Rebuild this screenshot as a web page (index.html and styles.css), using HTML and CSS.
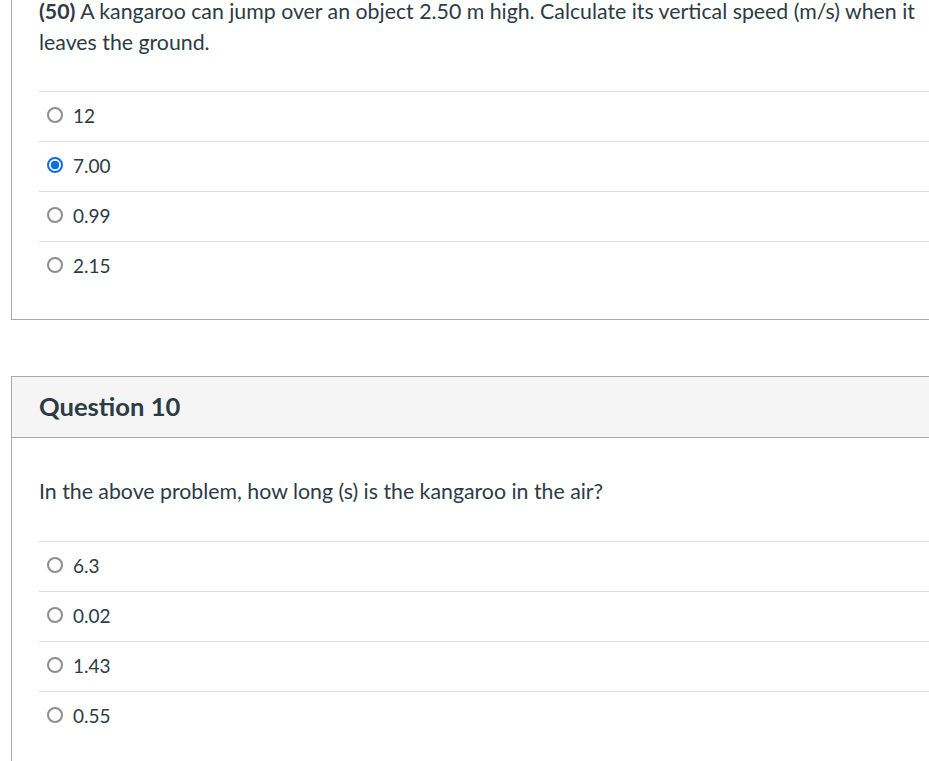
FILE: index.html
```html
<!DOCTYPE html>
<html lang="en">
<head>
  <meta charset="UTF-8" />
  <title>Quiz</title>
  <link rel="stylesheet" href="styles.css">
</head>
<body>
  <div class="page">
    <div class="question first">
      <div class="question-body">
        <p class="question-text"><b>(50)</b> A kangaroo can jump over an object 2.50 m high. Calculate its vertical speed (m/s) when it leaves the ground.</p>
        <div class="answers">
          <label class="answer"><span class="radio"></span>12</label>
          <label class="answer"><span class="radio checked"></span>7.00</label>
          <label class="answer"><span class="radio"></span>0.99</label>
          <label class="answer"><span class="radio"></span>2.15</label>
        </div>
      </div>
    </div>

    <div class="question">
      <div class="header">
        <h2>Question 10</h2>
      </div>
      <div class="question-body">
        <p class="question-text">In the above problem, how long (s) is the kangaroo in the air?</p>
        <div class="answers">
          <label class="answer"><span class="radio"></span>6.3</label>
          <label class="answer"><span class="radio"></span>0.02</label>
          <label class="answer"><span class="radio"></span>1.43</label>
          <label class="answer"><span class="radio"></span>0.55</label>
        </div>
      </div>
    </div>
  </div>
</body>
</html>
```

FILE: styles.css
```css
body {
  margin: 0;
  font-family: Lato, "Open Sans", sans-serif;
  color: #2d3b45;
  background: #fff;
  overflow: hidden;
}

.page {
  padding-left: 11px;
  width: 940px;
}

.question {
  border: 1px solid #a8a8a8;
  margin-bottom: 56px;
}

.question.first {
  border-top: none;
}

.header {
  background: #f5f5f5;
  border-bottom: 1px solid #a8a8a8;
  box-sizing: border-box;
  height: 61px;
  display: flex;
  align-items: center;
  padding: 0 0 3px 27px;
}

.header h2 {
  margin: 0;
  font-size: 25.6px;
  font-weight: 700;
}

.question-body {
  padding: 0 0 28px 27px;
}

.question-text {
  margin: 0;
  width: 890px;
  font-size: 21.3px;
  line-height: 31px;
}

.first .question-text {
  margin-top: -4px;
  padding-bottom: 33px;
}

.question:not(.first) .question-text {
  padding: 38px 0 34px;
}

.answers {
  display: flex;
  flex-direction: column;
}

.answer {
  display: flex;
  align-items: center;
  gap: 10px;
  box-sizing: border-box;
  height: 50px;
  border-top: 1px solid #dcdcdc;
  padding: 0 0 3px 8px;
  font-size: 19px;
}

.radio {
  width: 16px;
  height: 16px;
  border: 2px solid #8d8d93;
  border-radius: 50%;
  box-sizing: border-box;
}

.radio.checked {
  border: 2px solid #0b6ee5;
  background: radial-gradient(circle, #0b6ee5 0 4px, #fff 4.6px);
}
```
